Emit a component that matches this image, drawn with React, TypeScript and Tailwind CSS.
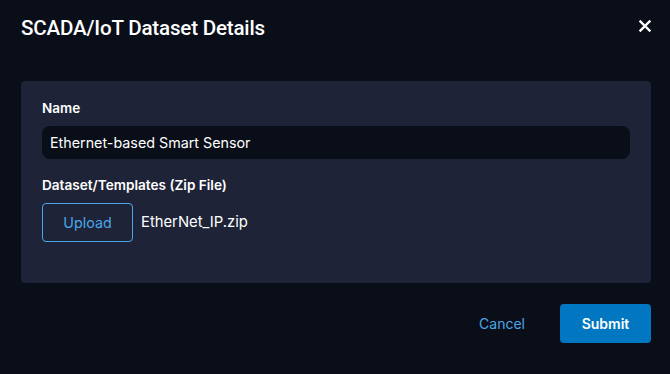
import React from 'react';

function CloseIcon() {
  return (
    <svg width="12" height="12" viewBox="0 0 12 12" fill="none">
      <path d="M1.5 1.5 L10.5 10.5 M10.5 1.5 L1.5 10.5" stroke="white" strokeWidth="2.4" strokeLinecap="square" />
    </svg>
  );
}

export default function App() {
  return (
    <div
      className="w-[670px] h-[374px] bg-[#0a0e19] text-white flex flex-col"
      style={{ fontFamily: 'Inter, "Noto Sans", sans-serif' }}
    >
      {/* Header */}
      <div className="flex items-center justify-between pl-[21px] pr-[19px] h-[56px]">
        <h2 className="text-[20.6px] font-medium tracking-[-0.2px]" style={{ fontFamily: 'Roboto, sans-serif' }}>
          SCADA/IoT Dataset Details
        </h2>
        <button className="w-[12px] h-[12px] mb-[4px] flex items-center justify-center">
          <CloseIcon />
        </button>
      </div>

      {/* Body */}
      <div className="ml-[21px] mr-[19px] mt-[25px] h-[202px] rounded-[4px] bg-[#1e2337] pl-[21px] pr-[21px] pt-[18px]">
        <label className="block text-[13.5px] font-semibold leading-[18px] text-white">Name</label>
        <div className="mt-[9px] h-[33px] rounded-[8px] bg-[#0a0e19] flex items-center px-[8px] text-[14.3px] text-white">
          Ethernet-based Smart Sensor
        </div>
        <label className="block mt-[17px] text-[13.6px] font-semibold leading-[18px] text-white">
          Dataset/Templates (Zip File)
        </label>
        <div className="mt-[9px] flex items-center gap-[8px]">
          <button className="w-[91px] h-[39px] rounded-[4px] border border-[#4aa6e6] text-[14.3px] text-[#4aa6e6] flex items-center justify-center">
            Upload
          </button>
          <span className="text-[14.8px] text-white">EtherNet_IP.zip</span>
        </div>
      </div>

      {/* Footer */}
      <div className="flex items-center justify-end gap-[35px] pr-[19px] mt-[21px]">
        <button className="text-[14px] text-[#4aa6e6]">Cancel</button>
        <button className="w-[91px] h-[39px] rounded-[4px] bg-[#0077c0] text-[14px] font-semibold text-white">
          Submit
        </button>
      </div>
    </div>
  );
}
